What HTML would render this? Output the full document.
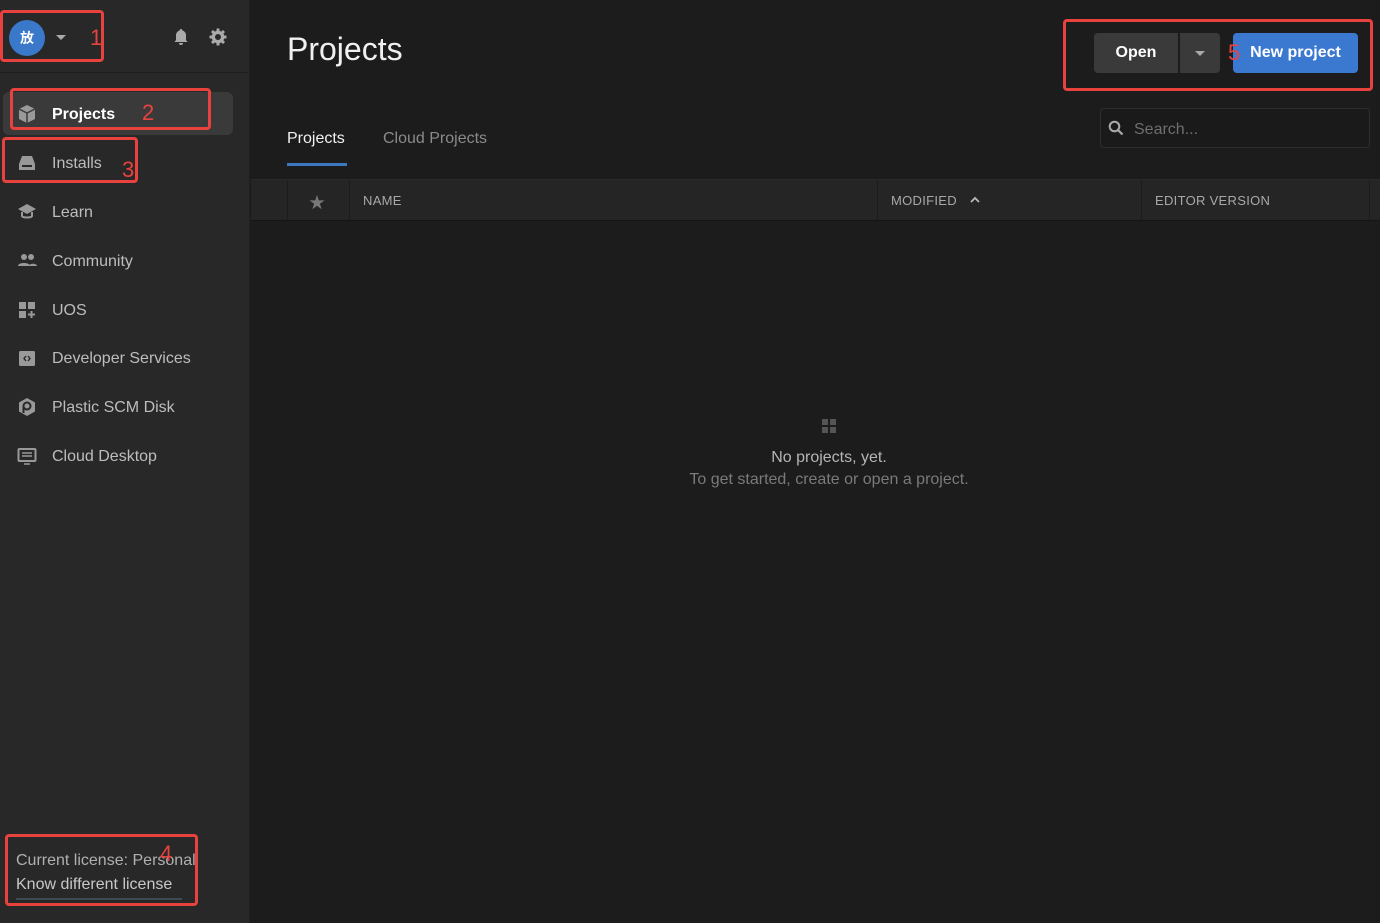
<!DOCTYPE html>
<html><head><meta charset="utf-8"><style>
*{box-sizing:border-box;margin:0;padding:0}
body{width:1380px;height:923px;background:#1c1c1c;font-family:"Liberation Sans","Noto Sans CJK SC",sans-serif;overflow:hidden;position:relative;color:#c4c4c4}
.sb{position:absolute;left:0;top:0;width:250px;height:923px;background:#282828;border-right:1px solid #202020}
.abs{position:absolute}
.red{position:absolute;border:3px solid #e8423e;border-radius:4px}
.rn{position:absolute;color:#e8423e;font-size:22px}
.nav{position:absolute;left:52px;font-size:16px;color:#bdbdbd}
.ic{position:absolute;left:17px;width:20px;height:20px}
.th{position:absolute;top:193px;font-size:13px;color:#a8a8a8;letter-spacing:.3px}
</style></head><body>
<div class="sb">
 <div class="abs" style="left:9px;top:20px;width:36px;height:36px;border-radius:50%;background:#3a78c9;color:#fff;font-size:14px;font-weight:bold;text-align:center;line-height:36px">放</div>
 <div class="abs" style="left:56px;top:35px;border-left:5px solid transparent;border-right:5px solid transparent;border-top:5px solid #aaa"></div>
 <svg class="abs" style="left:172px;top:28px" width="18" height="18" viewBox="0 0 18 18"><path d="M9 1a1.2 1.2 0 0 1 1.2 1.4A5 5 0 0 1 14 7.5V12l1.5 2H2.5L4 12V7.5a5 5 0 0 1 3.8-5.1A1.2 1.2 0 0 1 9 1zM7 15h4a2 2 0 0 1-4 0z" fill="#aaa"/></svg>
 <svg class="abs" style="left:209px;top:28px" width="18" height="18" viewBox="0 0 18 18"><g fill="#aaa"><rect x="7.5" y="0.5" width="3" height="17" rx="0.5"/><rect x="7.5" y="0.5" width="3" height="17" rx="0.5" transform="rotate(45 9 9)"/><rect x="7.5" y="0.5" width="3" height="17" rx="0.5" transform="rotate(90 9 9)"/><rect x="7.5" y="0.5" width="3" height="17" rx="0.5" transform="rotate(135 9 9)"/><circle cx="9" cy="9" r="6.3"/></g><circle cx="9" cy="9" r="3" fill="#282828"/></svg>
 <div class="abs" style="left:0;top:72px;width:250px;height:1px;background:#1f1f1f"></div>
 <div class="abs" style="left:3px;top:92px;width:230px;height:43px;background:#3a3a3a;border-radius:6px"></div>
 <svg class="ic" style="top:104px" viewBox="0 0 20 20"><path d="M10 1l8 4v10l-8 4-8-4V5z" fill="#999"/><path d="M10 9l8-4M10 9v10M10 9L2 5" stroke="#3a3a3a" stroke-width="1.5" fill="none"/></svg>
 <div class="nav" style="top:106px;color:#fff;font-weight:bold">Projects</div>
 <svg class="ic" style="top:153px" viewBox="0 0 20 20"><path d="M5 3h10l3 8v6H2v-6z" fill="#999"/><rect x="5" y="12" width="10" height="2" fill="#282828"/></svg>
 <div class="nav" style="top:155px">Installs</div>
 <svg class="ic" style="top:202px" viewBox="0 0 20 20"><path d="M10 2l9 5-9 5-9-5z" fill="#999"/><path d="M5 10v4c0 2 10 2 10 0v-4" stroke="#999" stroke-width="2" fill="none"/></svg>
 <div class="nav" style="top:204px">Learn</div>
 <svg class="ic" style="top:251px" viewBox="0 0 20 20"><circle cx="7" cy="6" r="3" fill="#999"/><circle cx="14" cy="6" r="3" fill="#999"/><path d="M1 15c0-4 12-4 12 0zM12 15c0-3 8-3 8 0z" fill="#999"/></svg>
 <div class="nav" style="top:253px">Community</div>
 <svg class="ic" style="top:300px" viewBox="0 0 20 20"><rect x="2" y="2" width="7" height="7" fill="#999"/><rect x="11" y="2" width="7" height="7" fill="#999"/><rect x="2" y="11" width="7" height="7" fill="#999"/><path d="M14.5 11v7M11 14.5h7" stroke="#999" stroke-width="2"/></svg>
 <div class="nav" style="top:302px">UOS</div>
 <svg class="ic" style="top:348px" viewBox="0 0 20 20"><rect x="2" y="3" width="16" height="15" rx="1.5" fill="#999"/><path d="M9 8l-2 2.5 2 2.5M11 8l2 2.5-2 2.5" stroke="#282828" stroke-width="1.4" fill="none"/></svg>
 <div class="nav" style="top:350px">Developer Services</div>
 <svg class="ic" style="top:397px" viewBox="0 0 20 20"><path d="M10 1l8 4.5v9L10 19l-8-4.5v-9z" fill="#999"/><circle cx="10" cy="9" r="3.5" fill="none" stroke="#282828" stroke-width="2"/><path d="M6.5 9v7" stroke="#282828" stroke-width="2"/></svg>
 <div class="nav" style="top:399px">Plastic SCM Disk</div>
 <svg class="ic" style="top:446px" viewBox="0 0 20 20"><rect x="1.5" y="3" width="17" height="12" rx="1" fill="none" stroke="#999" stroke-width="2"/><path d="M5 7h10M5 10h10M7 18h6" stroke="#999" stroke-width="1.6"/></svg>
 <div class="nav" style="top:448px">Cloud Desktop</div>
 <div class="abs" style="left:16px;top:852px;font-size:16px;color:#b0b0b0">Current license: Personal</div>
 <div class="abs" style="left:16px;top:876px;font-size:16px;color:#c8c8c8;border-bottom:2px solid #3e4a52;padding-bottom:4px;width:166px">Know different license</div>
</div>
<div class="abs" style="left:287px;top:31px;font-size:32px;color:#f0f0f0">Projects</div>
<div class="abs" style="left:1094px;top:33px;width:84px;height:40px;background:#3a3a3a;border-radius:4px 0 0 4px;color:#fff;font-weight:bold;font-size:16px;text-align:center;line-height:40px">Open</div>
<div class="abs" style="left:1180px;top:33px;width:40px;height:40px;background:#3a3a3a;border-radius:0 4px 4px 0"></div>
<div class="abs" style="left:1195px;top:51px;border-left:5px solid transparent;border-right:5px solid transparent;border-top:5px solid #aaa"></div>
<div class="abs" style="left:1233px;top:33px;width:125px;height:40px;background:#3b78d0;border-radius:4px;color:#fff;font-weight:bold;font-size:16px;text-align:center;line-height:40px">New project</div>
<div class="abs" style="left:1100px;top:108px;width:270px;height:40px;border:1px solid #2e2e2e;border-radius:4px;background:#1a1a1a"></div>
<svg class="abs" style="left:1108px;top:120px" width="16" height="16" viewBox="0 0 16 16"><circle cx="6.5" cy="6.5" r="4.8" fill="none" stroke="#aaa" stroke-width="2"/><path d="M10 10l4.5 4.5" stroke="#aaa" stroke-width="2.2"/></svg>
<div class="abs" style="left:1134px;top:121px;font-size:16px;color:#6e6e6e">Search...</div>
<div class="abs" style="left:287px;top:130px;font-size:16px;color:#f0f0f0">Projects</div>
<div class="abs" style="left:287px;top:163px;width:60px;height:3px;background:#3b78c0"></div>
<div class="abs" style="left:383px;top:130px;font-size:16px;color:#8a8a8a">Cloud Projects</div>
<div class="abs" style="left:251px;top:179px;width:1129px;height:42px;background:#252525;border-top:1px solid #2a2a2a;border-bottom:1px solid #151515"></div>
<div class="abs" style="left:287px;top:180px;width:1px;height:40px;background:#1c1c1c"></div>
<div class="abs" style="left:349px;top:180px;width:1px;height:40px;background:#1c1c1c"></div>
<div class="abs" style="left:877px;top:180px;width:1px;height:40px;background:#1c1c1c"></div>
<div class="abs" style="left:1141px;top:180px;width:1px;height:40px;background:#1c1c1c"></div>
<div class="abs" style="left:1369px;top:180px;width:1px;height:40px;background:#1c1c1c"></div>
<div class="abs" style="left:309px;top:189px;font-size:16px;color:#777">★</div>
<div class="th" style="left:363px">NAME</div>
<div class="th" style="left:891px">MODIFIED</div>
<svg class="abs" style="left:969px;top:195px" width="12" height="10" viewBox="0 0 12 10"><path d="M2 7l4-4 4 4" stroke="#bbb" stroke-width="1.8" fill="none"/></svg>
<div class="th" style="left:1155px">EDITOR VERSION</div>
<svg class="abs" style="left:821px;top:418px" width="16" height="16" viewBox="0 0 16 16"><rect x="1" y="1" width="6" height="6" fill="#555"/><rect x="9" y="1" width="6" height="6" fill="#555"/><rect x="1" y="9" width="6" height="6" fill="#555"/><rect x="9" y="9" width="6" height="6" fill="#555"/></svg>
<div class="abs" style="left:629px;top:449px;width:400px;text-align:center;font-size:16px;color:#b5b5b5">No projects, yet.</div>
<div class="abs" style="left:579px;top:471px;width:500px;text-align:center;font-size:16px;color:#7a7a7a">To get started, create or open a project.</div>
<div class="red" style="left:0;top:10px;width:104px;height:52px"></div><div class="rn" style="left:90px;top:25px">1</div>
<div class="red" style="left:10px;top:88px;width:201px;height:42px"></div><div class="rn" style="left:142px;top:100px">2</div>
<div class="red" style="left:2px;top:137px;width:136px;height:46px"></div><div class="rn" style="left:122px;top:157px">3</div>
<div class="red" style="left:5px;top:834px;width:193px;height:72px"></div><div class="rn" style="left:160px;top:841px">4</div>
<div class="red" style="left:1063px;top:19px;width:310px;height:72px"></div><div class="rn" style="left:1228px;top:40px">5</div>
</body></html>
